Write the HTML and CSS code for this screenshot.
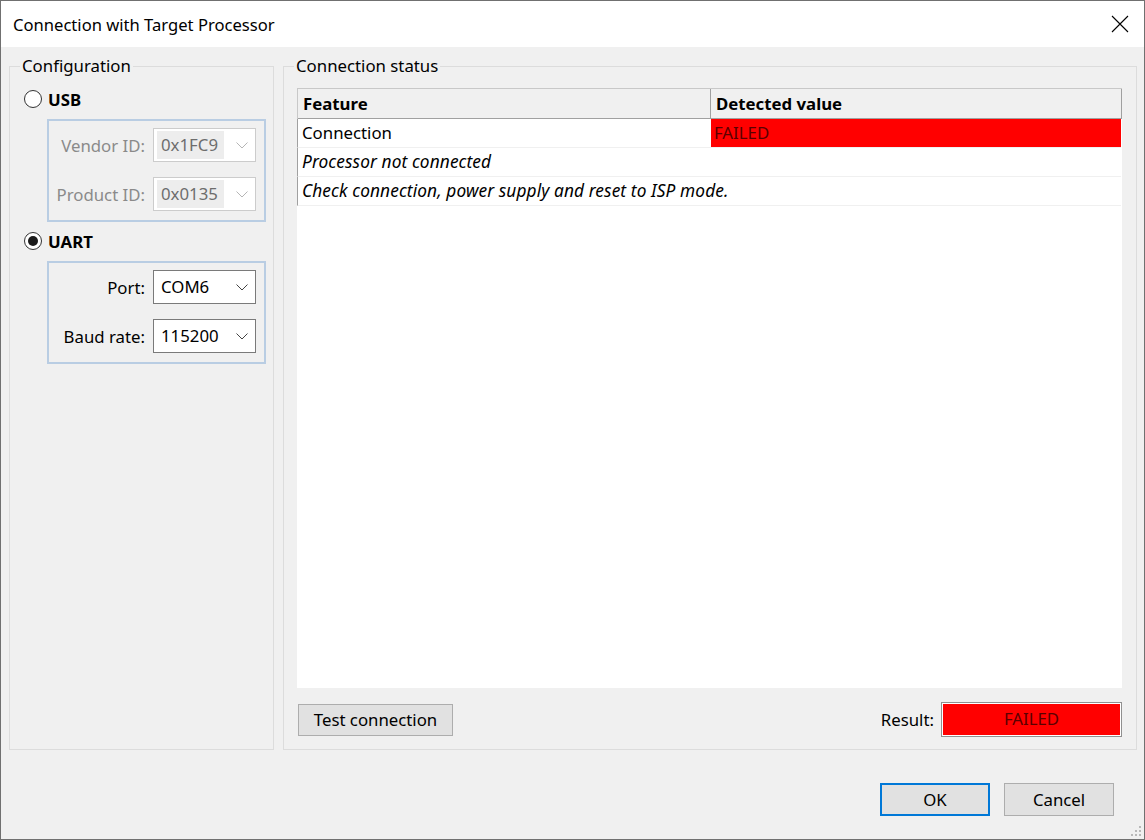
FILE: index.html
```html
<!doctype html>
<html lang="en">
<head>
    <meta charset="UTF-8">
    <title>Connection with Target Processor</title>
    <link rel="stylesheet" href="styles.css">
</head>
<body>
<div class="window">
    <div class="titlebar">
        <span class="title">Connection with Target Processor</span>
        <svg class="close" width="18" height="18" viewBox="0 0 18 18">
            <path d="M1 1 L17 17 M17 1 L1 17" stroke="#000" stroke-width="1.1" fill="none"/>
        </svg>
    </div>

    <div class="client">
        <div class="groups">
            <fieldset class="group config">
                <legend>Configuration</legend>

                <div class="radio-row">
                    <span class="radio"></span>
                    <span class="radio-label">USB</span>
                </div>
                <div class="subbox disabled">
                    <div class="field">
                        <label>Vendor ID:</label>
                        <div class="combo">
                            <span class="combo-value">0x1FC9</span>
                            <svg class="chevron" width="12" height="7" viewBox="0 0 12 7"><path d="M0.5 0.5 L6 6 L11.5 0.5" fill="none" stroke="currentColor"/></svg>
                        </div>
                    </div>
                    <div class="field">
                        <label>Product ID:</label>
                        <div class="combo">
                            <span class="combo-value">0x0135</span>
                            <svg class="chevron" width="12" height="7" viewBox="0 0 12 7"><path d="M0.5 0.5 L6 6 L11.5 0.5" fill="none" stroke="currentColor"/></svg>
                        </div>
                    </div>
                </div>

                <div class="radio-row">
                    <span class="radio checked"></span>
                    <span class="radio-label">UART</span>
                </div>
                <div class="subbox">
                    <div class="field">
                        <label>Port:</label>
                        <div class="combo">
                            <span class="combo-value">COM6</span>
                            <svg class="chevron" width="12" height="7" viewBox="0 0 12 7"><path d="M0.5 0.5 L6 6 L11.5 0.5" fill="none" stroke="currentColor"/></svg>
                        </div>
                    </div>
                    <div class="field">
                        <label>Baud rate:</label>
                        <div class="combo">
                            <span class="combo-value">115200</span>
                            <svg class="chevron" width="12" height="7" viewBox="0 0 12 7"><path d="M0.5 0.5 L6 6 L11.5 0.5" fill="none" stroke="currentColor"/></svg>
                        </div>
                    </div>
                </div>
            </fieldset>

            <fieldset class="group status">
                <legend>Connection status</legend>

                <div class="grid">
                    <div class="grid-head">
                        <div class="cell">Feature</div>
                        <div class="cell">Detected value</div>
                    </div>
                    <div class="grid-row">
                        <div class="cell">Connection</div>
                        <div class="cell failed">FAILED</div>
                    </div>
                    <div class="grid-row note">
                        <div class="cell wide">Processor not connected</div>
                    </div>
                    <div class="grid-row note">
                        <div class="cell wide">Check connection, power supply and reset to ISP mode.</div>
                    </div>
                </div>

                <div class="status-bar">
                    <button class="btn test">Test connection</button>
                    <div class="result">
                        <span class="result-label">Result:</span>
                        <div class="result-box"><div class="result-value">FAILED</div></div>
                    </div>
                </div>
            </fieldset>
        </div>

        <div class="dialog-buttons">
            <button class="btn default">OK</button>
            <button class="btn">Cancel</button>
        </div>
    </div>

    <svg class="grip" width="12" height="12" viewBox="0 0 12 12">
        <g fill="#b8b8b8">
            <rect x="9" y="1" width="2" height="2"/>
            <rect x="5" y="5" width="2" height="2"/>
            <rect x="9" y="5" width="2" height="2"/>
            <rect x="1" y="9" width="2" height="2"/>
            <rect x="5" y="9" width="2" height="2"/>
            <rect x="9" y="9" width="2" height="2"/>
        </g>
    </svg>
</div>
</body>
</html>
```

FILE: styles.css
```css
*{
    box-sizing: border-box;
}
body{
    margin: 0;
    font-family: "Noto Sans", "Open Sans", sans-serif;
    font-size: 16.8px;
    color: #000;
    background-color: #f0f0f0;
}

.window{
    position: relative;
    width: 1145px;
    height: 840px;
    border: 1px solid #707070;
    background-color: #f0f0f0;
}

.titlebar{
    height: 46px;
    background-color: #fff;
    display: flex;
    align-items: center;
    justify-content: space-between;
    padding: 0 15px 0 12px;
}
.title{
    font-size: 16.6px;
}

.client{
    padding: 9px 7px 0 8px;
}
.groups{
    display: flex;
    gap: 9px;
    height: 694px;
}

.group{
    margin: 0;
    padding: 0;
    border: 1px solid #dcdcdc;
    min-width: 0;
}
.group legend{
    padding: 0 2px;
    line-height: 20px;
}
.config{
    width: 265px;
    padding: 0 7px 0 14px;
}
.config legend{
    margin-left: -4px;
}
.status{
    width: 854px;
    padding: 0 14px 0 13px;
    display: flex;
    flex-direction: column;
}
.status legend{
    margin-left: -3px;
}

/* radio buttons */
.radio-row{
    display: flex;
    align-items: center;
    gap: 6px;
    height: 20px;
    margin-top: 13px;
}
.radio-row + .subbox{
    margin-top: 10px;
}
.subbox + .radio-row{
    margin-top: 9px;
}
.radio{
    width: 18px;
    height: 18px;
    border: 1.5px solid #333;
    border-radius: 50%;
    background-color: #fff;
    display: flex;
    align-items: center;
    justify-content: center;
}
.radio.checked::after{
    content: "";
    width: 10px;
    height: 10px;
    border-radius: 50%;
    background-color: #1a1a1a;
}
.radio-label{
    font-weight: bold;
}

/* group boxes inside configuration */
.subbox{
    margin-left: 23px;
    height: 103px;
    border: 2px solid #b9cde3;
    padding: 7px 8px 0 0;
    display: flex;
    flex-direction: column;
    gap: 15px;
}
.field{
    display: flex;
    align-items: center;
    justify-content: flex-end;
    gap: 8px;
}
.combo{
    width: 103px;
    height: 34px;
    border: 1px solid #7a7a7a;
    background-color: #fff;
    display: flex;
    align-items: center;
    justify-content: space-between;
    padding: 0 7px 0 3px;
    color: #000;
}
.combo-value{
    padding: 3px 4px;
    line-height: 22px;
}
.chevron{
    color: #444;
    flex-shrink: 0;
}
.disabled label{
    color: #8a8a8a;
}
.disabled .combo{
    border-color: #cccccc;
    color: #6d6d6d;
}
.disabled .combo-value{
    background-color: #ededed;
    padding-right: 6px;
}
.disabled .chevron{
    color: #b5b5b5;
}

/* status grid */
.grid{
    margin-top: 12px;
    height: 600px;
    background-color: #fff;
}
.grid-head{
    display: grid;
    grid-template-columns: 413px 1fr;
    height: 31px;
    background-color: #f0f0f0;
    border-top: 1px solid #c8c8c8;
    border-left: 1px solid #c8c8c8;
    font-weight: bold;
}
.grid-head .cell{
    border-right: 1px solid #a0a0a0;
    border-bottom: 1px solid #a0a0a0;
    padding: 1px 5px 0;
    line-height: 27px;
}
.grid-row{
    display: grid;
    grid-template-columns: 413px 1fr;
    height: 29px;
    border-left: 1px solid #a0a0a0;
    border-bottom: 1px solid #f0f0f0;
    margin-right: 1px;
}
.grid-row .cell{
    padding: 0 4px;
    line-height: 27px;
}
.grid-row .cell.failed{
    background-color: #ff0000;
    color: #5a0000;
    padding-left: 3px;
}
.note .cell.wide{
    grid-column: 1 / 3;
    font-style: italic;
    font-size: 17.3px;
    letter-spacing: 0.1px;
}

/* bottom part of status */
.status-bar{
    margin-top: 14px;
    height: 35px;
    display: flex;
    align-items: center;
    justify-content: space-between;
    padding-left: 1px;
}
.result{
    display: flex;
    align-items: center;
    gap: 7px;
}
.result-box{
    width: 181px;
    height: 35px;
    border: 1px solid #909090;
    padding: 1px;
    background-color: #fff;
}
.result-value{
    height: 100%;
    background-color: #ff0000;
    color: #5a0000;
    text-align: center;
    line-height: 30px;
}

/* buttons */
.btn{
    font-family: inherit;
    font-size: 16.8px;
    color: #000;
    background-color: #e1e1e1;
    border: 1px solid #adadad;
    padding: 0;
    height: 33px;
    width: 110px;
}
.btn.test{
    width: 155px;
    height: 32px;
}
.btn.default{
    border: 2px solid #0078d7;
}
.dialog-buttons{
    display: flex;
    justify-content: flex-end;
    gap: 14px;
    margin-top: 33px;
    padding-right: 23px;
}

.grip{
    position: absolute;
    right: 2px;
    bottom: 2px;
}
```
